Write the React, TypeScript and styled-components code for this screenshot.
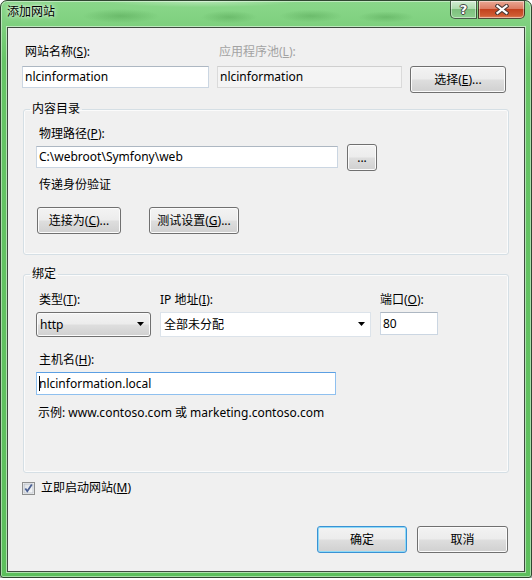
import { FC, ReactNode } from "react";
import styled, { createGlobalStyle } from "styled-components";

const FONT = `"Noto Sans", "Noto Sans CJK SC", sans-serif`;

const GlobalStyle = createGlobalStyle`
    html, body {
        margin: 0;
        padding: 0;
    }
    body {
        background: #ffffff;
        font-family: ${FONT};
        font-size: 12px;
        color: #000;
    }
    * {
        box-sizing: border-box;
    }
`;

const Window = styled.div`
    width: 532px;
    height: 578px;
    display: flex;
    flex-direction: column;
    border: 1px solid #2f4630;
    border-radius: 7px 7px 3px 3px;
    padding: 0 6px 5px;
    background:
        radial-gradient(ellipse 55px 10px at 120px 15px, rgba(50, 130, 50, 0.3), transparent 70%),
        radial-gradient(ellipse 40px 9px at 228px 16px, rgba(50, 130, 50, 0.28), transparent 70%),
        radial-gradient(ellipse 45px 9px at 310px 15px, rgba(50, 130, 50, 0.28), transparent 70%),
        radial-gradient(ellipse 40px 8px at 385px 16px, rgba(50, 130, 50, 0.28), transparent 70%),
        radial-gradient(ellipse 140px 9px at 200px 0px, rgba(255, 255, 255, 0.35), transparent 70%),
        linear-gradient(180deg, #8ad78a 0px, #7ed07e 24px, #66c566 60px, #5cbf5c 100%);
    box-shadow: inset 0 0 0 1px rgba(255, 255, 255, 0.45), 0 1px 1px rgba(0, 0, 0, 0.6);
`;

const TitleBar = styled.div`
    height: 26px;
    display: flex;
    align-items: flex-start;
`;

const Title = styled.div`
    flex: 1;
    margin-top: 3px;
    line-height: 16px;
    color: #000;
    text-shadow: 0 0 6px rgba(255, 255, 255, 0.9), 0 0 3px rgba(255, 255, 255, 0.8);
`;

const CaptionButtons = styled.div`
    display: flex;
    gap: 1px;
`;

const CaptionButton = styled.div<{ $w: number; $close?: boolean }>`
    width: ${p => p.$w}px;
    height: 18px;
    display: flex;
    align-items: center;
    justify-content: center;
    border: 1px solid rgba(30, 45, 30, 0.75);
    border-top: none;
    border-radius: ${p => p.$close ? "0 0 5px 0" : "0 0 0 5px"};
    background: ${p => p.$close
        ? "linear-gradient(180deg, #e9a894 0%, #dc7d63 45%, #c3421f 50%, #cf5a32 85%, #e0835c 100%)"
        : "linear-gradient(180deg, rgba(235,245,235,0.75) 0%, rgba(200,225,200,0.6) 45%, rgba(120,175,120,0.55) 50%, rgba(150,205,150,0.6) 100%)"};
    box-shadow: inset 0 0 0 1px rgba(255, 255, 255, 0.45);
`;

const HelpGlyph = styled.span`
    font-family: "DejaVu Sans", sans-serif;
    font-weight: bold;
    font-size: 13px;
    line-height: 13px;
    color: #fff;
    text-shadow: 0 0 1px #333, 1px 0 0 #4a4a4a, -1px 0 0 #4a4a4a, 0 1px 0 #4a4a4a, 0 -1px 0 #4a4a4a;
`;

const Client = styled.div`
    flex: 1;
    display: flex;
    flex-direction: column;
    border: 1px solid #3f4a40;
    background: #f0f0f0;
    padding: 16px 16px 0 14px;
    box-shadow: 0 0 0 1px rgba(255, 255, 255, 0.5);
`;

const TopGrid = styled.div`
    display: grid;
    grid-template-columns: 187px 185px 96px;
    column-gap: 8px;
    row-gap: 6px;
    align-items: start;
`;

const Label = styled.div<{ $pad?: number; $disabled?: boolean; $mt?: number }>`
    line-height: 16px;
    padding-left: ${p => p.$pad ?? 3}px;
    margin-top: ${p => p.$mt ?? 0}px;
    color: ${p => p.$disabled ? "#a3a3a3" : "#000"};
    white-space: nowrap;
`;

const TextField = styled.div<{ $w?: number; $h?: number; $mt?: number; $disabled?: boolean; $focused?: boolean }>`
    width: ${p => p.$w ? `${p.$w}px` : "100%"};
    height: ${p => p.$h ?? 22}px;
    margin-top: ${p => p.$mt ?? 0}px;
    display: flex;
    align-items: center;
    padding: 0 2px 1px;
    background: ${p => p.$disabled ? "#f4f4f4" : "#fff"};
    border: 1px solid ${p => p.$focused ? "#8fc0ef" : p.$disabled ? "#dadada" : "#cbd6e2"};
    border-top-color: ${p => p.$focused ? "#5b9fe3" : p.$disabled ? "#cfcfcf" : "#adb7c2"};
    white-space: nowrap;
    overflow: hidden;
`;

const Caret = styled.span`
    display: inline-block;
    width: 1px;
    height: 15px;
    margin-right: -1px;
    background: #000;
`;

const Button = styled.button<{ $w: number; $default?: boolean; $ml?: number }>`
    width: ${p => p.$w}px;
    height: 27px;
    margin-left: ${p => p.$ml ?? 0}px;
    padding: 0 0 1px;
    font-family: ${FONT};
    font-size: 12px;
    color: #000;
    border: 1px solid ${p => p.$default ? "#3a92d4" : "#707070"};
    border-radius: 3px;
    background: linear-gradient(180deg, #f3f3f3 0%, #ececec 48%, #dedede 52%, #d0d0d0 100%);
    box-shadow: inset 0 0 0 1px ${p => p.$default ? "#8fdaf7" : "#fbfbfb"};
    white-space: nowrap;
`;

const Group = styled.fieldset<{ $mt: number; $pt: number; $pb: number }>`
    margin: ${p => p.$mt}px -1px 0 1px;
    min-width: 0;
    border: 1px solid #d5dfe5;
    border-radius: 3px;
    padding: ${p => p.$pt}px 12px ${p => p.$pb}px 12px;
    box-shadow: inset 0 0 0 1px rgba(255, 255, 255, 0.7);
`;

const Legend = styled.legend`
    margin-left: -6px;
    padding: 0 2px;
    line-height: 16px;
`;

const PathRow = styled.div`
    display: flex;
    align-items: flex-start;
    gap: 9px;
    margin-top: 2px;
`;

const ButtonRow = styled.div<{ $mt: number; $gap: number; $end?: boolean }>`
    display: flex;
    gap: ${p => p.$gap}px;
    margin-top: ${p => p.$mt}px;
    justify-content: ${p => p.$end ? "flex-end" : "flex-start"};
`;

const BindGrid = styled.div`
    display: grid;
    grid-template-columns: 115px 211px 58px;
    column-gap: 9px;
    row-gap: 4px;
    align-items: start;
`;

const Select = styled.div<{ $combo?: boolean }>`
    height: 25px;
    display: flex;
    align-items: center;
    justify-content: space-between;
    padding: 0 ${p => p.$combo ? 5 : 6}px 1px ${p => p.$combo ? 3 : 3}px;
    border: 1px solid ${p => p.$combo ? "#dce3ea" : "#707070"};
    border-radius: ${p => p.$combo ? 0 : 3}px;
    background: ${p => p.$combo
        ? "#fff"
        : "linear-gradient(180deg, #f3f3f3 0%, #ececec 48%, #dedede 52%, #d0d0d0 100%)"};
    box-shadow: ${p => p.$combo ? "none" : "inset 0 0 0 1px #fbfbfb"};
    white-space: nowrap;
`;

const CheckRow = styled.div`
    display: flex;
    align-items: center;
    gap: 6px;
    margin-top: 7px;
    line-height: 16px;
`;

const Arrow: FC = () => (
    <svg width="7" height="4" viewBox="0 0 7 4">
        <polygon points="0,0 7,0 3.5,4" fill="#000" />
    </svg>
);

const CloseGlyph: FC = () => (
    <svg width="14" height="11" viewBox="0 0 14 11">
        <g strokeLinecap="square">
            <line x1="2.5" y1="2" x2="11.5" y2="9" stroke="#4a3a36" strokeWidth="4.2" />
            <line x1="11.5" y1="2" x2="2.5" y2="9" stroke="#4a3a36" strokeWidth="4.2" />
            <line x1="2.5" y1="2" x2="11.5" y2="9" stroke="#ffffff" strokeWidth="2.2" />
            <line x1="11.5" y1="2" x2="2.5" y2="9" stroke="#ffffff" strokeWidth="2.2" />
        </g>
    </svg>
);

const CheckBox: FC = () => (
    <svg width="13" height="13" viewBox="0 0 13 13">
        <defs>
            <linearGradient id="cbg" x1="0" y1="0" x2="1" y2="1">
                <stop offset="0" stopColor="#dcdfe4" />
                <stop offset="1" stopColor="#f8f9fa" />
            </linearGradient>
        </defs>
        <rect x="0.5" y="0.5" width="12" height="12" fill="#f4f4f4" stroke="#8e8f8f" />
        <rect x="2" y="2" width="9" height="9" fill="url(#cbg)" stroke="#a6adb8" strokeWidth="0.6" />
        <path d="M3.3 6.4 L5.3 9.2 L9.8 2.6" fill="none" stroke="#4b6093" strokeWidth="1.8" />
    </svg>
);

const Key: FC<{ children: ReactNode }> = ({ children }) => <u>{children}</u>;

export default function App() {
    return (
        <>
            <GlobalStyle />
            <Window>
                <TitleBar>
                    <Title>添加网站</Title>
                    <CaptionButtons>
                        <CaptionButton $w={27}>
                            <HelpGlyph>?</HelpGlyph>
                        </CaptionButton>
                        <CaptionButton $w={47} $close>
                            <CloseGlyph />
                        </CaptionButton>
                    </CaptionButtons>
                </TitleBar>
                <Client>
                    <TopGrid>
                        <Label>网站名称(<Key>S</Key>):</Label>
                        <Label $pad={2} $disabled>应用程序池(<Key>L</Key>):</Label>
                        <div />
                        <TextField>nlcinformation</TextField>
                        <TextField $disabled>nlcinformation</TextField>
                        <Button $w={96}>选择(<Key>E</Key>)...</Button>
                    </TopGrid>

                    <Group $mt={8} $pt={9} $pb={20}>
                        <Legend>内容目录</Legend>
                        <Label>物理路径(<Key>P</Key>):</Label>
                        <PathRow>
                            <TextField $w={302} $mt={2}>C:\webroot\Symfony\web</TextField>
                            <Button $w={30}>...</Button>
                        </PathRow>
                        <Label $mt={6}>传递身份验证</Label>
                        <ButtonRow $mt={14} $gap={28}>
                            <Button $w={84} $ml={1}>连接为(<Key>C</Key>)...</Button>
                            <Button $w={90}>测试设置(<Key>G</Key>)...</Button>
                        </ButtonRow>
                    </Group>

                    <Group $mt={11} $pt={10} $pb={51}>
                        <Legend>绑定</Legend>
                        <BindGrid>
                            <Label>类型(<Key>T</Key>):</Label>
                            <Label $pad={0}>IP 地址(<Key>I</Key>):</Label>
                            <Label $pad={0}>端口(<Key>O</Key>):</Label>
                            <Select>
                                <span>http</span>
                                <Arrow />
                            </Select>
                            <Select $combo>
                                <span>全部未分配</span>
                                <Arrow />
                            </Select>
                            <TextField $h={23}>80</TextField>
                        </BindGrid>
                        <Label $mt={15}>主机名(<Key>H</Key>):</Label>
                        <TextField $w={300} $h={23} $mt={4} $focused>
                            <Caret />nlcinformation.local
                        </TextField>
                        <Label $pad={2} $mt={10}>示例: www.contoso.com 或 marketing.contoso.com</Label>
                    </Group>

                    <CheckRow>
                        <CheckBox />
                        <span>立即启动网站(<Key>M</Key>)</span>
                    </CheckRow>

                    <ButtonRow $mt={30} $gap={10} $end>
                        <Button $w={90} $default>确定</Button>
                        <Button $w={91}>取消</Button>
                    </ButtonRow>
                </Client>
            </Window>
        </>
    );
}
